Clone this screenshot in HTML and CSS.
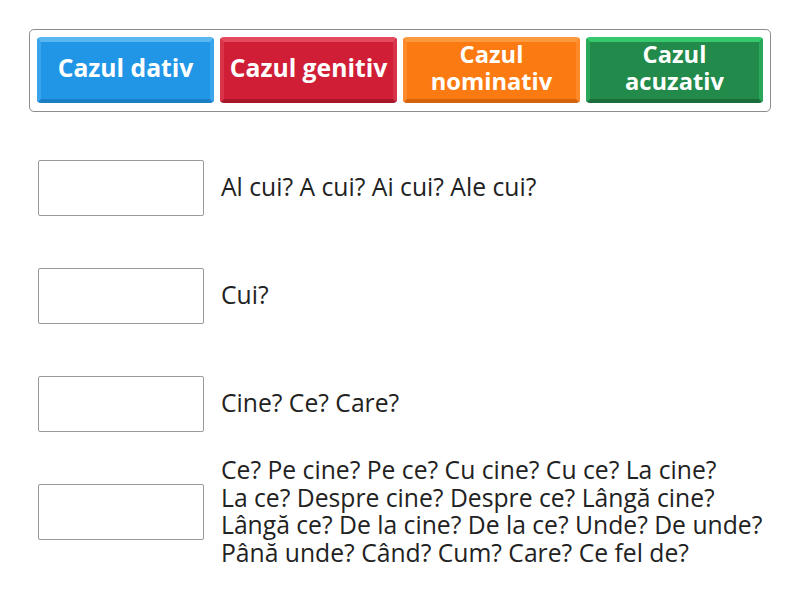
FILE: index.html
```html
<!DOCTYPE html>
<html lang="ro">
<head>
<meta charset="utf-8">
<link rel="stylesheet" href="styles.css">
</head>
<body>
<div class="bank">
  <div class="tile blue">Cazul dativ</div>
  <div class="tile red">Cazul genitiv</div>
  <div class="tile orange two">Cazul<br>nominativ</div>
  <div class="tile green two">Cazul<br>acuzativ</div>
</div>
<div class="rows">
  <div class="row"><div class="slot"></div><div class="text">Al cui? A cui? Ai cui? Ale cui?</div></div>
  <div class="row"><div class="slot"></div><div class="text">Cui?</div></div>
  <div class="row"><div class="slot"></div><div class="text">Cine? Ce? Care?</div></div>
  <div class="row tall"><div class="slot"></div><div class="text"><span class="line">Ce? Pe cine? Pe ce? Cu cine? Cu ce? La cine?</span><span class="line">La ce? Despre cine? Despre ce? Lângă cine?</span><span class="line">Lângă ce? De la cine? De la ce? Unde? De unde?</span><span class="line">Până unde? Când? Cum? Care? Ce fel de?</span></div></div>
</div>
</body>
</html>
```
FILE: styles.css
```css
* { box-sizing: border-box; }
html, body { margin: 0; padding: 0; background: #fff; }
body {
  font-family: "Open Sans", "Liberation Sans", sans-serif;
  color: #222;
  min-height: 600px;
}
.bank {
  margin: 29px 0 0 29px;
  width: 742px;
  height: 83px;
  border: 1px solid #8c8c8c;
  border-radius: 5px;
  padding: 7px 7px 8px 7px;
  display: flex;
  gap: 6px;
}
.tile {
  width: 177px;
  height: 66px;
  border-radius: 4px;
  border-style: solid;
  border-width: 5px 4px 4px 4px;
  padding-bottom: 6px;
  color: #fff;
  font-weight: 700;
  font-size: 24.7px;
  line-height: 27px;
  display: flex;
  align-items: center;
  justify-content: center;
  text-align: center;
}
.tile.two { font-size: 23.7px; line-height: 27px; }
.blue {
  background: #2196e6;
  border-color: #5bb7f0 #3aa5ec #1a7fc4 #3aa5ec;
}
.red {
  background: #d01e36;
  border-color: #e34a5e #d93349 #a8162a #d93349;
}
.orange {
  background: #fb7a12;
  border-color: #fd9a40 #fc8a28 #d5620a #fc8a28;
}
.green {
  background: #228a4a;
  border-color: #36c86d #2aa85a #1b6e3b #2aa85a;
}
.rows {
  margin: 48px 0 0 38px;
  display: flex;
  flex-direction: column;
  padding-bottom: 30px;
}
.row {
  min-height: 56px;
  display: flex;
  align-items: center;
}
.row + .row { margin-top: 52px; }
.row + .row.tall { margin-top: 24px; }
.slot {
  width: 166px;
  height: 56px;
  flex: none;
  border: 1px solid #999;
  border-radius: 2px;
  background: #fff;
}
.text {
  margin-left: 17px;
  padding-bottom: 2px;
  font-size: 24.7px;
  line-height: 27.5px;
  white-space: nowrap;
}
.line { display: block; }
```
